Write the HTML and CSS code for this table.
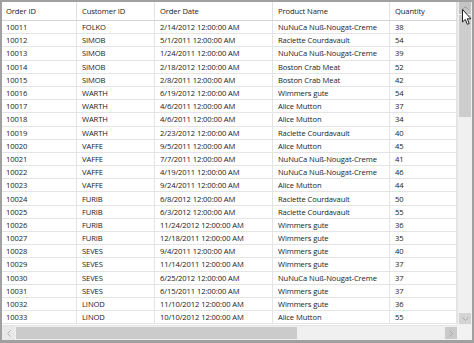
FILE: index.html
```html
<!DOCTYPE html>
<html>
<head>
<meta charset="utf-8">
<link rel="stylesheet" href="styles.css">
</head>
<body>
<div class="frame">
  <div class="table">
    <div class="row head">
      <div class="c c1">Order ID</div><div class="c c2">Customer ID</div><div class="c c3">Order Date</div><div class="c c4">Product Name</div><div class="c c5">Quantity</div>
    </div>
    <div class="row"><div class="c c1">10011</div><div class="c c2">FOLKO</div><div class="c c3">2/14/2012 12:00:00 AM</div><div class="c c4">NuNuCa Nuß-Nougat-Creme</div><div class="c c5">38</div></div>
    <div class="row"><div class="c c1">10012</div><div class="c c2">SIMOB</div><div class="c c3">5/1/2011 12:00:00 AM</div><div class="c c4">Raclette Courdavault</div><div class="c c5">54</div></div>
    <div class="row"><div class="c c1">10013</div><div class="c c2">SIMOB</div><div class="c c3">1/24/2011 12:00:00 AM</div><div class="c c4">NuNuCa Nuß-Nougat-Creme</div><div class="c c5">39</div></div>
    <div class="row"><div class="c c1">10014</div><div class="c c2">SIMOB</div><div class="c c3">2/18/2012 12:00:00 AM</div><div class="c c4">Boston Crab Meat</div><div class="c c5">52</div></div>
    <div class="row"><div class="c c1">10015</div><div class="c c2">SIMOB</div><div class="c c3">2/8/2011 12:00:00 AM</div><div class="c c4">Boston Crab Meat</div><div class="c c5">42</div></div>
    <div class="row"><div class="c c1">10016</div><div class="c c2">WARTH</div><div class="c c3">6/19/2012 12:00:00 AM</div><div class="c c4">Wimmers gute</div><div class="c c5">54</div></div>
    <div class="row"><div class="c c1">10017</div><div class="c c2">WARTH</div><div class="c c3">4/6/2011 12:00:00 AM</div><div class="c c4">Alice Mutton</div><div class="c c5">37</div></div>
    <div class="row"><div class="c c1">10018</div><div class="c c2">WARTH</div><div class="c c3">4/6/2011 12:00:00 AM</div><div class="c c4">Alice Mutton</div><div class="c c5">34</div></div>
    <div class="row"><div class="c c1">10019</div><div class="c c2">WARTH</div><div class="c c3">2/23/2012 12:00:00 AM</div><div class="c c4">Raclette Courdavault</div><div class="c c5">40</div></div>
    <div class="row"><div class="c c1">10020</div><div class="c c2">VAFFE</div><div class="c c3">9/5/2011 12:00:00 AM</div><div class="c c4">Alice Mutton</div><div class="c c5">45</div></div>
    <div class="row"><div class="c c1">10021</div><div class="c c2">VAFFE</div><div class="c c3">7/7/2011 12:00:00 AM</div><div class="c c4">NuNuCa Nuß-Nougat-Creme</div><div class="c c5">41</div></div>
    <div class="row"><div class="c c1">10022</div><div class="c c2">VAFFE</div><div class="c c3">4/19/2011 12:00:00 AM</div><div class="c c4">NuNuCa Nuß-Nougat-Creme</div><div class="c c5">46</div></div>
    <div class="row"><div class="c c1">10023</div><div class="c c2">VAFFE</div><div class="c c3">9/24/2011 12:00:00 AM</div><div class="c c4">Alice Mutton</div><div class="c c5">44</div></div>
    <div class="row"><div class="c c1">10024</div><div class="c c2">FURIB</div><div class="c c3">6/8/2012 12:00:00 AM</div><div class="c c4">Raclette Courdavault</div><div class="c c5">50</div></div>
    <div class="row"><div class="c c1">10025</div><div class="c c2">FURIB</div><div class="c c3">6/3/2012 12:00:00 AM</div><div class="c c4">Raclette Courdavault</div><div class="c c5">55</div></div>
    <div class="row"><div class="c c1">10026</div><div class="c c2">FURIB</div><div class="c c3">11/24/2012 12:00:00 AM</div><div class="c c4">Wimmers gute</div><div class="c c5">36</div></div>
    <div class="row"><div class="c c1">10027</div><div class="c c2">FURIB</div><div class="c c3">12/18/2011 12:00:00 AM</div><div class="c c4">Wimmers gute</div><div class="c c5">35</div></div>
    <div class="row"><div class="c c1">10028</div><div class="c c2">SEVES</div><div class="c c3">9/4/2011 12:00:00 AM</div><div class="c c4">Wimmers gute</div><div class="c c5">40</div></div>
    <div class="row"><div class="c c1">10029</div><div class="c c2">SEVES</div><div class="c c3">11/14/2011 12:00:00 AM</div><div class="c c4">Wimmers gute</div><div class="c c5">37</div></div>
    <div class="row"><div class="c c1">10030</div><div class="c c2">SEVES</div><div class="c c3">6/25/2012 12:00:00 AM</div><div class="c c4">NuNuCa Nuß-Nougat-Creme</div><div class="c c5">37</div></div>
    <div class="row"><div class="c c1">10031</div><div class="c c2">SEVES</div><div class="c c3">6/15/2011 12:00:00 AM</div><div class="c c4">Wimmers gute</div><div class="c c5">37</div></div>
    <div class="row"><div class="c c1">10032</div><div class="c c2">LINOD</div><div class="c c3">11/10/2012 12:00:00 AM</div><div class="c c4">Wimmers gute</div><div class="c c5">36</div></div>
    <div class="row"><div class="c c1">10033</div><div class="c c2">LINOD</div><div class="c c3">10/10/2012 12:00:00 AM</div><div class="c c4">Alice Mutton</div><div class="c c5">55</div></div>
  </div>
  <div class="vscroll">
    <div class="btn up"><svg width="7" height="4" viewBox="0 0 7 4"><path d="M0.5 3.5 L3.5 0.5 L6.5 3.5" fill="none" stroke="#9a9a9a" stroke-width="1"/></svg></div>
    <div class="vthumb"></div>
    <div class="vtrack"></div>
    <div class="btn down"><svg width="7" height="4" viewBox="0 0 7 4"><path d="M0.5 0.5 L3.5 3.5 L6.5 0.5" fill="none" stroke="#a8a8a8" stroke-width="1"/></svg></div>
  </div>
  <div class="hscroll">
    <div class="btn left"><svg width="4" height="7" viewBox="0 0 4 7"><path d="M3.5 0.5 L0.5 3.5 L3.5 6.5" fill="none" stroke="#b0b0b0" stroke-width="1"/></svg></div>
    <div class="hthumb"></div>
    <div class="htrack"></div>
    <div class="btn right"><svg width="4" height="7" viewBox="0 0 4 7"><path d="M0.5 0.5 L3.5 3.5 L0.5 6.5" fill="none" stroke="#a8a8a8" stroke-width="1"/></svg></div>
  </div>
  <div class="corner"></div>
  <svg class="cursor" width="10" height="17" viewBox="0 0 10 17"><path d="M0.5 0.5 L0.5 13 L3.4 10.4 L5.3 15.3 L7.2 14.5 L5.3 9.8 L9 9.8 Z" fill="#fff" stroke="#222" stroke-width="1" stroke-linejoin="round"/></svg>
</div>
</body>
</html>
```

FILE: styles.css
```css
html, body {
  margin: 0;
  padding: 0;
  background: #ffffff;
}
.frame {
  position: relative;
  box-sizing: border-box;
  width: 474px;
  height: 343px;
  border-style: solid;
  border-color: #a0a0a0;
  border-width: 2px 2px 3px 2px;
  display: grid;
  grid-template-columns: 1fr 15px;
  grid-template-rows: 1fr 15px;
  background: #ffffff;
  overflow: hidden;
  font-family: "Open Sans", "Noto Sans", sans-serif;
  font-size: 7.6px;
  letter-spacing: -0.1px;
  color: #1a1a1a;
}
.table {
  overflow: hidden;
  display: flex;
  flex-direction: column;
}
.row {
  display: flex;
  height: 13.2px;
  flex: none;
  border-bottom: 1px solid #e4e4e4;
  box-sizing: border-box;
}
.row.head {
  height: 19px;
  border-bottom: 1px solid #d6d6d6;
  background: #ffffff;
}
.c {
  box-sizing: border-box;
  border-right: 1px solid #e4e4e4;
  padding-left: 5px;
  display: flex;
  align-items: center;
  white-space: nowrap;
  overflow: hidden;
}
.head .c {
  border-right-color: #e0e0e0;
}
.c1 { width: 75px; padding-left: 4px; }
.c2 { width: 78px; }
.c3 { width: 118px; }
.c4 { width: 117px; }
.c5 { width: 67px; }
.vscroll {
  display: flex;
  flex-direction: column;
  background: #f0f0f0;
  border-left: 1px solid #e4e4e4;
  box-sizing: border-box;
}
.btn {
  display: flex;
  align-items: center;
  justify-content: center;
  flex: none;
}
.up {
  height: 12px;
  background: #c4c4c4;
  margin: 0 1px;
}
.vthumb {
  height: 102px;
  margin: 1px 1px 0 1px;
  background: #cdcdcd;
}
.vtrack { flex: 1; }
.down {
  height: 11px;
  margin: 0 1px 1px 1px;
  background: #d4d4d4;
}
.hscroll {
  display: flex;
  background: #f0f0f0;
  border-top: 1px solid #e4e4e4;
  box-sizing: border-box;
}
.left {
  width: 13px;
  background: #e9e9e9;
}
.hthumb {
  width: 281px;
  margin: 1px 0 1px 1px;
  background: #cbcbcb;
}
.htrack { flex: 1; }
.right {
  width: 12px;
  margin: 1px 0;
  background: #cacaca;
}
.corner {
  background: #f2f2f2;
}
.cursor {
  position: absolute;
  left: 460px;
  top: 7px;
}
```
